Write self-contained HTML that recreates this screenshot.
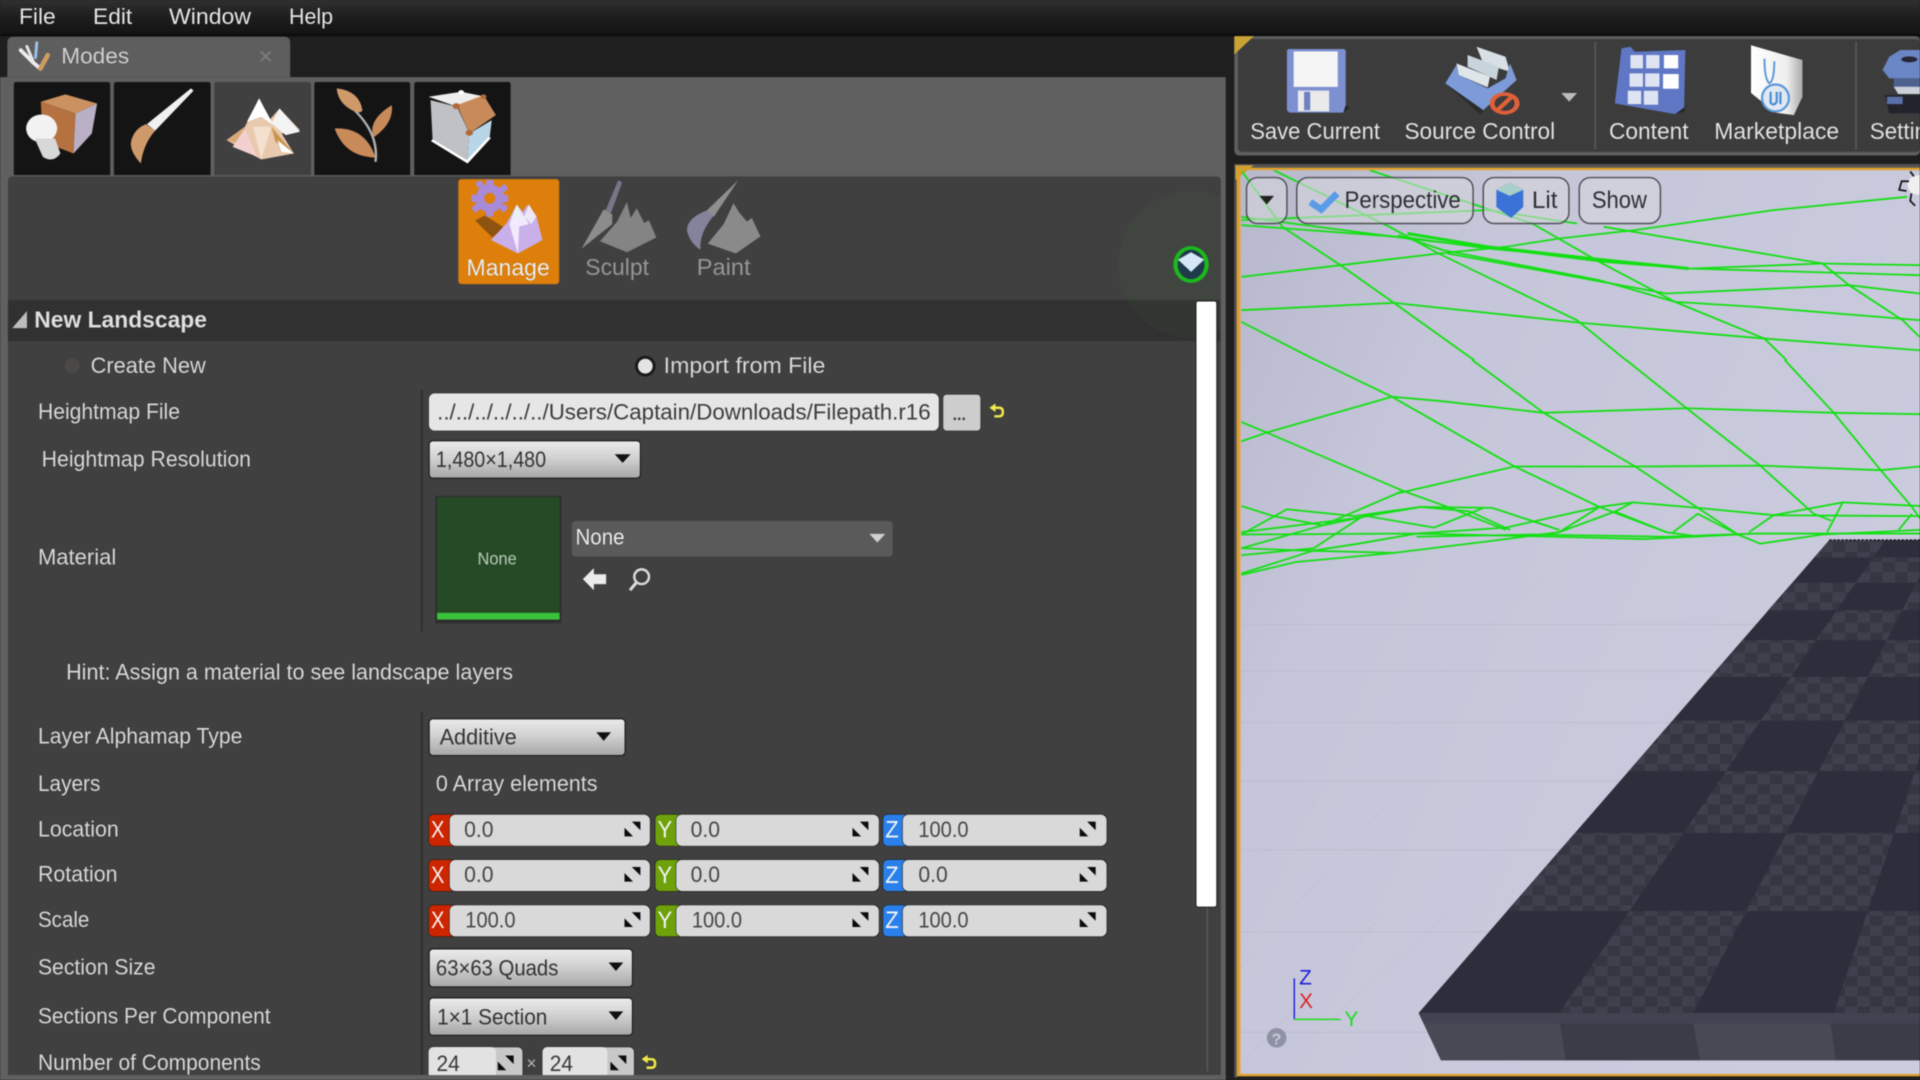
<!DOCTYPE html>
<html><head><meta charset="utf-8"><title>Modes</title>
<style>
html,body{margin:0;padding:0;width:1920px;height:1080px;overflow:hidden;background:#1f1f1f}
svg{display:block;filter:blur(.55px)}
text{font-family:"Liberation Sans",sans-serif}
.l{font-size:18px;fill:#dadada}
.d{font-size:18px;fill:#3c3c3c}
.s{filter:drop-shadow(.7px .9px 0 #000)}
</style></head><body>
<svg width="1920" height="1080" viewBox="0 0 1568 882" xmlns="http://www.w3.org/2000/svg">
<defs>
<linearGradient id="mb" x1="0" y1="0" x2="0" y2="1"><stop offset="0" stop-color="#303030"/><stop offset=".5" stop-color="#1e1e1e"/><stop offset="1" stop-color="#131313"/></linearGradient>
<linearGradient id="cb" x1="0" y1="0" x2="0" y2="1"><stop offset="0" stop-color="#ebebeb"/><stop offset=".45" stop-color="#d2d2d2"/><stop offset="1" stop-color="#a6a6a6"/></linearGradient>
<linearGradient id="vp" x1="0" y1="0" x2="1" y2=".6"><stop offset="0" stop-color="#b8b8cc"/><stop offset=".3" stop-color="#c5c6d9"/><stop offset="1" stop-color="#cbccde"/></linearGradient>
<linearGradient id="bag" x1="0" y1="0" x2="1" y2="0"><stop offset="0" stop-color="#fff"/><stop offset=".7" stop-color="#eee"/><stop offset="1" stop-color="#aaa"/></linearGradient>
<pattern id="fc" patternUnits="userSpaceOnUse" width="56" height="44"><rect width="56" height="44" fill="#363743"/><rect width="28" height="22" fill="#41424e"/><rect x="28" y="22" width="28" height="22" fill="#41424e"/></pattern>
<clipPath id="vc"><rect x="1013" y="139" width="555" height="738"/></clipPath>
<clipPath id="pc"><rect x="0" y="63" width="997" height="815"/></clipPath>
<path id="sp" d="M-6.5-1V6H.5ZM6.5 1V-6H-.5Z" fill="#0c0c0c"/>
</defs>

<!-- base -->
<rect width="1568" height="882" fill="#1f1f1f"/>
<rect width="1568" height="28" fill="url(#mb)"/>
<rect y="28" width="1568" height="1.5" fill="#0a0a0a"/>
<g class="s" fill="#e6e6e6" font-size="18">
<text x="15.5" y="19.500" textLength="30" lengthAdjust="spacingAndGlyphs">File</text>
<text x="76" y="19.500" textLength="32" lengthAdjust="spacingAndGlyphs">Edit</text>
<text x="138" y="19.500" textLength="67" lengthAdjust="spacingAndGlyphs">Window</text>
<text x="236" y="19.500" textLength="36" lengthAdjust="spacingAndGlyphs">Help</text>
</g>

<!-- left panel -->
<rect x="0" y="63" width="1001" height="819" fill="#606060"/>
<path d="M6 63V35q0-5 5-5H232q5 0 5 5V63Z" fill="#5e5e5e"/>
<!-- modes tab icon -->
<g fill="none" stroke-linecap="round">
<path d="M17 41l10 10 6 5" stroke="#ececec" stroke-width="3.200"/>
<path d="M22 38l5 12" stroke="#e8e8e8" stroke-width="2.400"/>
<path d="M30 35l-1 12" stroke="#9cc0e8" stroke-width="2.400"/>
<path d="M39 45l-6 11" stroke="#d09a60" stroke-width="3.800"/>
</g>
<text class="s" x="50" y="52" font-size="18" fill="#d4d4d4" textLength="55.5" lengthAdjust="spacingAndGlyphs">Modes</text>
<path d="M213 42l8 8M221 42l-8 8" stroke="#7c7c7c" stroke-width="1.600"/>

<!-- mode buttons -->
<g>
<path d="M11.3 143V69q0-2 2-2H88q2 0 2 2V143Z" fill="#141414"/>
<path d="M93 143V69q0-2 2-2H170q2 0 2 2V143Z" fill="#141414"/>
<path d="M175 143V69q0-2 2-2H252q2 0 2 2V143Z" fill="#404040"/>
<path d="M256.7 143V69q0-2 2-2H333q2 0 2 2V143Z" fill="#141414"/>
<path d="M338.3 143V69q0-2 2-2H415q2 0 2 2V143Z" fill="#141414"/>
</g>
<g transform="scale(.3333 .2725)">
<!-- place -->
<path d="M100 305L160 283 238 310 185 340Z" fill="#cc9160"/>
<path d="M100 305L185 340 180 460 105 425Z" fill="#b5713f"/>
<path d="M185 340L238 310 225 400 180 460Z" fill="#bab0c6"/>
<ellipse cx="102" cy="385" rx="38" ry="42" fill="#f2f2f2"/>
<path d="M85 415H135L148 460Q130 490 105 470Z" fill="#d8d8d8"/>
<!-- brush -->
<path d="M468 265L474 272 380 392 360 372Z" fill="#f0f0f0"/>
<path d="M358 372L380 392Q352 430 345 490 315 450 322 420 330 385 358 372Z" fill="#cf9a6a"/>
<!-- mountain -->
<path d="M635 295L600 380 555 420 640 478 720 460 690 400 735 390 685 325 660 360Z" fill="#e8c9ad"/>
<path d="M600 380L555 420 610 440Z" fill="#d9a878"/>
<path d="M600 385L570 440 630 470Z" fill="#f2d0d0"/>
<path d="M620 380L640 478 665 380Z" fill="#f5dfcf"/>
<path d="M665 380L720 460 675 425Z" fill="#c9954e"/>
<path d="M680 420L720 460 690 455Z" fill="#fff"/>
<path d="M635 295L605 365 640 350 670 375Z" fill="#fff"/>
<path d="M685 325L665 370 700 405 735 395Z" fill="#f4f4f4"/>
<!-- leaf -->
<path d="M920 485Q930 390 850 310" fill="none" stroke="#b0b0b0" stroke-width="6"/>
<path d="M825 265Q880 272 888 330 885 340 870 335 828 312 825 265Z" fill="#cf9a6a"/>
<path d="M960 315Q965 370 915 412 900 360 960 315Z" fill="#c98a5a"/>
<path d="M820 385Q895 380 920 472 845 470 820 385Z" fill="#c98a5a"/>
<!-- box -->
<path d="M1055 300L1120 320 1150 400 1145 485 1060 420Z" fill="#bfc1c6"/>
<path d="M1150 400L1205 360 1200 410 1145 485Z" fill="#b8d6e8"/>
<path d="M1050 290L1130 275 1190 290 1120 320Z" fill="#eee"/>
<path d="M1120 315L1185 285 1215 345 1150 400Z" fill="#c98a5a"/>
<path d="M1058 420L1145 485 1200 412" fill="none" stroke="#fff" stroke-width="7"/>
<circle cx="1130" cy="277" r="7" fill="#fff"/>
<circle cx="1150" cy="398" r="9" fill="#b06a3a"/><circle cx="1118" cy="318" r="9" fill="#b06a3a"/><circle cx="1185" cy="290" r="7" fill="#b06a3a"/>
</g>

<!-- inner panel -->
<path d="M6.5 878V148q0-4 4-4H993q4 0 4 4V878Z" fill="#404040"/>

<!-- New Landscape header -->
<rect x="6.5" y="245" width="990" height="33.5" fill="#313131"/>
<!-- glow -->
<g clip-path="url(#pc)"><circle cx="973" cy="216" r="60" fill="#40a040" fill-opacity=".06"/></g>
<path d="M10 268h12v-14Z" fill="#bdbdbd"/>
<text class="s" x="28" y="267.5" font-size="19" font-weight="bold" fill="#e0e0e0" textLength="141" lengthAdjust="spacingAndGlyphs">New Landscape</text>

<!-- tool buttons -->
<rect x="374.3" y="146.3" width="82.4" height="85.7" rx="2.5" fill="#dd7f0a"/>
<path d="M396 176l-8 4 14 14 10-8Z" fill="#7a4a10" opacity=".8"/>
<g fill="#a98ad8">
<circle cx="400" cy="162" r="11.5"/>
<path d="M397 147h6v5h-6ZM397 172h6v5h-6ZM385 159h5v6h-5ZM410 159h5v6h-5ZM388 150l4-3 4 4-4 4ZM408 170l4-4 3 4-4 4ZM388 174l-3-4 4-4 4 4ZM412 150l3 4-4 4-4-4Z"/>
</g>
<circle cx="400" cy="162" r="4.5" fill="#dd7f0a"/>
<path d="M422 167l-8 15-13 14 22 11 20-11-5-20-7-9-4 6Z" fill="#c9b0ea"/>
<path d="M422 167l-6 16 7 24 1-22 8-2Z" fill="#f2eafc"/>
<path d="M422 167l-5 13 5-3 5 5Z" fill="#e8f0f0"/>
<path d="M432 167l-4 10 6 6 4-6Z" fill="#eee8f6"/>
<text class="s" x="381" y="225" font-size="19" fill="#f2f2f2" textLength="68" lengthAdjust="spacingAndGlyphs">Manage</text>

<path d="M505 147l3 2-9 25-5-1Z" fill="#77778a"/>
<path d="M493 171l7 4 0 8-25 20Z" fill="#8c8c8c"/>
<path d="M512 165l-8 16-14 16 22 9 24-12-6-14-4 2-6-12-5 8Z" fill="#848484"/>
<text x="478" y="224.500" font-size="19" fill="#969696" textLength="52" lengthAdjust="spacingAndGlyphs">Sculpt</text>
<path d="M603 147l-27 26 7 4Z" fill="#8f8f8f"/>
<path d="M577 172q-16 6-16 16 2 10 11 16-1-14 11-28Z" fill="#85839b"/>
<path d="M599 166l-8 17-13 16 23 8 20-14-7-15-4 3-6-7Z" fill="#8a8a8a"/>
<text x="569" y="224.500" font-size="19" fill="#969696" textLength="44" lengthAdjust="spacingAndGlyphs">Paint</text>

<!-- gem -->
<ellipse cx="972.7" cy="216" rx="14.5" ry="15" fill="#1cb81c"/>
<ellipse cx="972.7" cy="216" rx="11" ry="12" fill="#1f3a4a"/>
<path d="M962 212l10.700-6 10.700 6-10.700 10Z" fill="#d4e8f6"/>

<!-- radios -->
<circle cx="59" cy="298.500" r="6" fill="#4c4848"/>
<text class="s l" x="74" y="304.500" textLength="94" lengthAdjust="spacingAndGlyphs">Create New</text>
<circle cx="527" cy="299" r="8.500" fill="#1a1a1a"/><circle cx="527" cy="299" r="6" fill="#e4e4e4"/>
<text class="s l" x="542" y="304.500" textLength="132" lengthAdjust="spacingAndGlyphs">Import from File</text>

<!-- separators -->
<path d="M344.500 318V516M344.500 581V878" stroke="#2a2a2a" stroke-width="1.200"/>

<!-- labels -->
<g class="s">
<text class="l" x="31" y="342" textLength="116" lengthAdjust="spacingAndGlyphs">Heightmap File</text>
<text class="l" x="34" y="381" textLength="171" lengthAdjust="spacingAndGlyphs">Heightmap Resolution</text>
<text class="l" x="31" y="461" textLength="64" lengthAdjust="spacingAndGlyphs">Material</text>
<text class="l" x="54" y="555" textLength="365" lengthAdjust="spacingAndGlyphs">Hint: Assign a material to see landscape layers</text>
<text class="l" x="31" y="607" textLength="167" lengthAdjust="spacingAndGlyphs">Layer Alphamap Type</text>
<text class="l" x="31" y="646" textLength="51" lengthAdjust="spacingAndGlyphs">Layers</text>
<text class="l" x="356" y="646" textLength="132" lengthAdjust="spacingAndGlyphs">0 Array elements</text>
<text class="l" x="31" y="683" textLength="66" lengthAdjust="spacingAndGlyphs">Location</text>
<text class="l" x="31" y="720" textLength="65" lengthAdjust="spacingAndGlyphs">Rotation</text>
<text class="l" x="31" y="757" textLength="42" lengthAdjust="spacingAndGlyphs">Scale</text>
<text class="l" x="31" y="796" textLength="96" lengthAdjust="spacingAndGlyphs">Section Size</text>
<text class="l" x="31" y="836" textLength="190" lengthAdjust="spacingAndGlyphs">Sections Per Component</text>
<text class="l" x="31" y="874" textLength="182" lengthAdjust="spacingAndGlyphs">Number of Components</text>
</g>

<!-- heightmap file -->
<rect x="350" y="321" width="417" height="31" rx="5" fill="#e6e6e6" stroke="#2c2c2c" stroke-width=".6"/>
<text class="d" x="357" y="342.500" textLength="403" lengthAdjust="spacingAndGlyphs">../../../../../../Users/Captain/Downloads/Filepath.r16</text>
<rect x="770" y="322" width="31" height="30" rx="3" fill="#cdcdcd" stroke="#2c2c2c" stroke-width=".6"/>
<text x="778" y="343" font-size="13" fill="#333" font-weight="bold">...</text>
<path d="M810 333h6q3 0 3 3.500t-3 3.500h-4" fill="none" stroke="#efe94a" stroke-width="2"/><path d="M813 329.500l-5 3.500 5 3.500Z" fill="#efe94a"/>

<!-- combos -->
<rect x="350.500" y="360" width="172.500" height="30.500" rx="3" fill="url(#cb)" stroke="#161616" stroke-width=".9"/>
<text class="d" x="356" y="381.500" textLength="90" lengthAdjust="spacingAndGlyphs" style="fill:#333">1,480×1,480</text>
<path d="M502 371h13l-6.500 7Z" fill="#111"/>

<rect x="350.500" y="587" width="160" height="30" rx="3" fill="url(#cb)" stroke="#161616" stroke-width=".9"/>
<text class="d" x="359" y="608" textLength="63" lengthAdjust="spacingAndGlyphs" style="fill:#333">Additive</text>
<path d="M487 598h12l-6 7Z" fill="#111"/>

<rect x="350.500" y="775" width="166" height="31" rx="3" fill="url(#cb)" stroke="#161616" stroke-width=".9"/>
<text class="d" x="356" y="796.500" textLength="100" lengthAdjust="spacingAndGlyphs" style="fill:#333">63×63 Quads</text>
<path d="M497 786h12l-6 7Z" fill="#111"/>

<rect x="350.500" y="815" width="166" height="30.500" rx="3" fill="url(#cb)" stroke="#161616" stroke-width=".9"/>
<text class="d" x="357" y="836.500" textLength="90" lengthAdjust="spacingAndGlyphs" style="fill:#333">1×1 Section</text>
<path d="M497 826h12l-6 7Z" fill="#111"/>

<!-- material -->
<rect x="355.500" y="405" width="103" height="104" fill="#1a1a1a" opacity=".5"/>
<rect x="357" y="406" width="100" height="100" fill="#264a26"/>
<rect x="357" y="500.500" width="100" height="5.500" fill="#3ac23a"/>
<text x="390" y="461" font-size="14" fill="#b8ccb8" textLength="32" lengthAdjust="spacingAndGlyphs">None</text>
<rect x="467" y="425.500" width="262" height="29" rx="3" fill="#5a5a5a"/>
<text class="s" x="470" y="444.500" font-size="18" fill="#eee" textLength="40" lengthAdjust="spacingAndGlyphs">None</text>
<path d="M710 436h13l-6.500 7Z" fill="#d0d0d0"/>
<path d="M476 473l9-9v5h10v8h-10v5Z" fill="#ececec"/>
<circle cx="524" cy="471" r="6" fill="none" stroke="#dcdcdc" stroke-width="2"/><path d="M519.500 476l-5 6" stroke="#dcdcdc" stroke-width="2.500"/>

<!-- vector fields -->
<g stroke="#1e1e1e" stroke-width=".5">
<rect x="350" y="665" width="181" height="26" rx="4" fill="#cc2500"/><rect x="367" y="665" width="164" height="26" rx="5" fill="#d9d9d9"/>
<rect x="535" y="665" width="183" height="26" rx="4" fill="#6ea20a"/><rect x="552" y="665" width="166" height="26" rx="5" fill="#d9d9d9"/>
<rect x="721" y="665" width="183" height="26" rx="4" fill="#2a80ea"/><rect x="737" y="665" width="167" height="26" rx="5" fill="#d9d9d9"/>
<rect x="350" y="702" width="181" height="26" rx="4" fill="#cc2500"/><rect x="367" y="702" width="164" height="26" rx="5" fill="#d9d9d9"/>
<rect x="535" y="702" width="183" height="26" rx="4" fill="#6ea20a"/><rect x="552" y="702" width="166" height="26" rx="5" fill="#d9d9d9"/>
<rect x="721" y="702" width="183" height="26" rx="4" fill="#2a80ea"/><rect x="737" y="702" width="167" height="26" rx="5" fill="#d9d9d9"/>
<rect x="350" y="739" width="181" height="26" rx="4" fill="#cc2500"/><rect x="367" y="739" width="164" height="26" rx="5" fill="#d9d9d9"/>
<rect x="535" y="739" width="183" height="26" rx="4" fill="#6ea20a"/><rect x="552" y="739" width="166" height="26" rx="5" fill="#d9d9d9"/>
<rect x="721" y="739" width="183" height="26" rx="4" fill="#2a80ea"/><rect x="737" y="739" width="167" height="26" rx="5" fill="#d9d9d9"/>
</g>
<g font-size="20" fill="#f4f4f4">
<text x="352" y="684" textLength="11" lengthAdjust="spacingAndGlyphs">X</text><text x="352" y="721" textLength="11" lengthAdjust="spacingAndGlyphs">X</text><text x="352" y="758" textLength="11" lengthAdjust="spacingAndGlyphs">X</text>
<text x="537" y="684" textLength="12" lengthAdjust="spacingAndGlyphs">Y</text><text x="537" y="721" textLength="12" lengthAdjust="spacingAndGlyphs">Y</text><text x="537" y="758" textLength="12" lengthAdjust="spacingAndGlyphs">Y</text>
<text x="723" y="684" textLength="11" lengthAdjust="spacingAndGlyphs">Z</text><text x="723" y="721" textLength="11" lengthAdjust="spacingAndGlyphs">Z</text><text x="723" y="758" textLength="11" lengthAdjust="spacingAndGlyphs">Z</text>
</g>
<g font-size="18" fill="#454545">
<text x="379" y="683.500" textLength="24" lengthAdjust="spacingAndGlyphs">0.0</text>
<text x="564" y="683.500" textLength="24" lengthAdjust="spacingAndGlyphs">0.0</text>
<text x="750" y="683.500" textLength="41" lengthAdjust="spacingAndGlyphs">100.0</text>
<text x="379" y="720.500" textLength="24" lengthAdjust="spacingAndGlyphs">0.0</text>
<text x="564" y="720.500" textLength="24" lengthAdjust="spacingAndGlyphs">0.0</text>
<text x="750" y="720.500" textLength="24" lengthAdjust="spacingAndGlyphs">0.0</text>
<text x="380" y="757.500" textLength="41" lengthAdjust="spacingAndGlyphs">100.0</text>
<text x="565" y="757.500" textLength="41" lengthAdjust="spacingAndGlyphs">100.0</text>
<text x="750" y="757.500" textLength="41" lengthAdjust="spacingAndGlyphs">100.0</text>
</g>
<use href="#sp" x="516.500" y="677"/><use href="#sp" x="702.700" y="677"/><use href="#sp" x="888.300" y="677"/>
<use href="#sp" x="516.500" y="714"/><use href="#sp" x="702.700" y="714"/><use href="#sp" x="888.300" y="714"/>
<use href="#sp" x="516.500" y="751"/><use href="#sp" x="702.700" y="751"/><use href="#sp" x="888.300" y="751"/>

<!-- components -->
<rect x="350" y="855" width="77" height="26" rx="4" fill="#c8c8c8" stroke="#1e1e1e" stroke-width=".5"/>
<rect x="350" y="855" width="55" height="26" rx="4" fill="#e2e2e2"/>
<rect x="443" y="855" width="75" height="26" rx="4" fill="#c8c8c8" stroke="#1e1e1e" stroke-width=".5"/>
<rect x="443" y="855" width="53" height="26" rx="4" fill="#e2e2e2"/>
<text x="356.500" y="874.500" font-size="18" fill="#383838" textLength="19" lengthAdjust="spacingAndGlyphs">24</text>
<text x="449" y="874.500" font-size="18" fill="#383838" textLength="19" lengthAdjust="spacingAndGlyphs">24</text>
<text x="430" y="873" font-size="14" fill="#b8b8b8">×</text>
<use href="#sp" x="413" y="868"/><use href="#sp" x="505" y="868"/>
<path d="M526 865h6q3 0 3 3.500t-3 3.500h-4" fill="none" stroke="#efe94a" stroke-width="2"/><path d="M529 861.500l-5 3.500 5 3.500Z" fill="#efe94a"/>

<!-- scrollbar -->
<path d="M986 741V875" stroke="#5c5c5c" stroke-width="1"/>
<rect x="976.700" y="245.800" width="17" height="495" rx="2" fill="#fff" stroke="#1c1c1c" stroke-width=".8"/>

<!-- bottom strip -->
<rect x="0" y="878" width="1001" height="4" fill="#606060"/>

<!-- top toolbar -->
<rect x="1008" y="29.500" width="560" height="97.500" rx="4" fill="#5e5e5e"/>
<rect x="1011" y="32" width="557" height="92" rx="3" fill="#3c3c3c"/>
<path d="M1008 29.500h16l-16 15Z" fill="#c9a236"/>
<rect x="1302" y="34" width="1.600" height="88" fill="#555"/>
<rect x="1515" y="34" width="1.600" height="88" fill="#555"/>
<!-- save -->
<path d="M1051 42q0-2 2-2h44q2 0 2 2v48l-2 2h-44l-2-2Z" fill="#7c90d2"/>
<rect x="1056.500" y="42" width="36" height="29" fill="#f5f5f5"/>
<rect x="1060" y="74" width="25.500" height="17" fill="#eaeaea"/>
<rect x="1065" y="75" width="5" height="15" fill="#6d80c0"/>
<path d="M1097 92l5-4-3-2Z" fill="#222"/>
<g transform="translate(996.300 0) scale(.3644 .2724)">
<!-- source control -->
<path d="M575 140L640 170 650 215 590 190Z" fill="#d8e0e6"/>
<path d="M555 165L625 200 620 240 555 200Z" fill="#c8d4dc"/>
<path d="M530 190L605 230 600 262 535 225Z" fill="#dfe6ea"/>
<path d="M505 250L530 195 535 225 600 265 640 235 650 190 665 240 590 330Z" fill="#7d9bd8"/>
<path d="M505 250L590 330 585 345Z" fill="#222" opacity=".6"/>
<circle cx="638" cy="310" r="28" fill="none" stroke="#e0603a" stroke-width="11"/>
<path d="M618 335L658 285" stroke="#e0603a" stroke-width="11"/>
<!-- content -->
<path d="M885 310L900 145 920 140 930 155 1043 150 1040 335 1020 342Z" fill="#5f77c4"/>
<path d="M1020 342L1040 335 1043 320Z" fill="#222"/>
<g fill="#dfe4f2">
<rect x="920" y="165" width="28" height="40"/><rect x="955" y="165" width="30" height="40"/><rect x="995" y="165" width="32" height="40" fill="#fff"/>
<rect x="918" y="220" width="30" height="40"/><rect x="953" y="220" width="32" height="40"/><rect x="993" y="222" width="35" height="44" fill="#fff"/>
<rect x="914" y="272" width="30" height="40"/><rect x="950" y="272" width="32" height="42"/>
</g>
<!-- settings gear -->
<path d="M1500 170L1525 150 1600 150 1620 235 1500 235 1485 210Z" fill="#6b86c4"/>
<ellipse cx="1545" cy="178" rx="18" ry="9" fill="#262636"/>
<path d="M1510 235H1620V262H1510Z" fill="#4e628e"/>
<path d="M1510 260H1620V282H1520Z" fill="#ccd0da"/>
<path d="M1490 285H1620V340H1500Z" fill="#23232c"/>
<path d="M1495 290H1530V312H1495Z" fill="#5a70a8"/>
</g>
<!-- marketplace -->
<path d="M1430 42l0-5 42 12v30l-7 15-15-2-20-16Z" fill="url(#bag)"/>
<path d="M1441 48q0 17 4 20 4-2 4-18" fill="none" stroke="#5a98d8" stroke-width="1.600"/>
<circle cx="1450" cy="80" r="11" fill="#e0e8f2" stroke="#5a98d8" stroke-width="1.800"/>
<path d="M1446 75v9q3 3 5-1v-8M1454 75v10" fill="none" stroke="#4a8cd0" stroke-width="1.800"/>
<g class="s" font-size="19" fill="#e4e4e4">
<text x="1021" y="113.500" textLength="106" lengthAdjust="spacingAndGlyphs">Save Current</text>
<text x="1147" y="113.500" textLength="123" lengthAdjust="spacingAndGlyphs">Source Control</text>
<text x="1314" y="113.500" textLength="65" lengthAdjust="spacingAndGlyphs">Content</text>
<text x="1400" y="113.500" textLength="102" lengthAdjust="spacingAndGlyphs">Marketplace</text>
<text x="1527" y="113.500" textLength="66" lengthAdjust="spacingAndGlyphs">Settings</text>
</g>
<path d="M1275 76h13l-6.500 7Z" fill="#bcbcbc"/>

<!-- viewport -->
<rect x="1008" y="134" width="560" height="748" fill="#1f1f1f"/>
<rect x="1008" y="134" width="560" height="3.500" fill="#555"/>
<rect x="1008" y="134" width="2.200" height="746" fill="#555"/>
<rect x="1010" y="137" width="558" height="742" fill="#e2a12e"/>
<rect x="1013" y="139" width="555" height="738" fill="url(#vp)"/>
<path d="M1009 135h15l-15 12Z" fill="#d0a030"/>

<g clip-path="url(#vc)">
<!-- floor grid -->
<g stroke="#b6b7ca" stroke-width=".8" fill="none" opacity=".6">
<path d="M1013 761H1280M1013 843H1175M1013 694H1330M1013 638H1380M1013 590H1420M1013 548H1460M1013 510H1490"/>
</g>
<g stroke="#b6b7ca" stroke-width=".7" fill="none" opacity=".35">
<path d="M1013 870L1130 747M1013 790L1130 660M1013 715L1260 470M1040 877L1180 747"/>
</g>
<!-- plane, zoom-7 coordinates -->
<g transform="translate(996.300 294) scale(.3646 .375)">
<path d="M1365 392H1700V1525H495L445 1422Z" fill="#2d2e3b"/>
<g fill="url(#fc)" fill-opacity=".92">
<path d="M760 1422H1060L1179 1200H917Z"/><path d="M1375 1422H1690L1727 1200H1451Z"/>
<path d="M643 1200H917L1038 1030H795Z"/><path d="M1179 1200H1451L1510 1030H1269Z"/>
<path d="M1038 1030H1269L1341 895H1134Z"/><path d="M1510 1030H1755L1777 895H1557Z"/>
<path d="M916 895H1134L1211 785H1014Z"/><path d="M1341 895H1557L1595 785H1400Z"/>
<path d="M1211 785H1400L1451 690H1279Z"/>
<path d="M1099 690H1279L1335 610H1170Z"/><path d="M1451 690H1627L1655 610H1494Z"/>
<path d="M1335 610H1494L1528 545H1382Z"/>
<path d="M1228 545H1382L1424 485H1282Z"/><path d="M1528 545H1677L1698 485H1560Z"/>
<path d="M1424 485H1560L1590 430H1463Z"/>
<path d="M1331 430H1463L1490 392H1365Z"/>
</g>
<path d="M445 1422H1700V1445H456Z" fill="#424350"/>
<g>
<path d="M456 1445H762L775 1525H495Z" fill="#484955"/>
<path d="M762 1445H1060L1075 1525H775Z" fill="#3b3c48"/>
<path d="M1060 1445H1368L1380 1525H1075Z" fill="#484955"/>
<path d="M1368 1445H1700V1525H1380Z" fill="#3b3c48"/>
</g>
<path d="M1365 392H1568" stroke="#181820" stroke-width="3" stroke-dasharray="5 4"/>
</g>

<!-- wire: upper (zoom-3 coordinates) -->
<g transform="translate(996.300 0) scale(.3644 .2724)" fill="none" stroke="#12e012" stroke-width="1.800" stroke-linejoin="round">
<polyline vector-effect="non-scaling-stroke" points="48,830 270,795 490,760 640,740 760,715 930,690 1240,630 1540,590"/>
<polyline vector-effect="non-scaling-stroke" points="48,930 390,908 810,968 1220,1015 1568,1050"/>
<polyline vector-effect="non-scaling-stroke" points="48,965 215,1080"/>
<polyline vector-effect="non-scaling-stroke" points="50,515 140,680 270,795 390,908 570,1080"/>
<polyline vector-effect="non-scaling-stroke" points="120,510 380,680 490,760 800,960 910,1080"/>
<polyline vector-effect="non-scaling-stroke" points="335,510 700,670 850,785 1020,905 1220,1015 1270,1080"/>
<polyline vector-effect="non-scaling-stroke" points="48,650 420,715 620,745 860,785 1050,805 1568,825"/>
<polyline vector-effect="non-scaling-stroke" points="48,675 420,712 600,745 800,770 1000,800"/>
<polyline vector-effect="non-scaling-stroke" points="48,660 600,630 800,670"/>
<polyline vector-effect="non-scaling-stroke" points="400,705 500,750 850,840 1020,905 1200,920 1568,960"/>
<polyline vector-effect="non-scaling-stroke" points="860,680 1350,790 1410,855 1530,960 1568,1010"/>
<polyline vector-effect="non-scaling-stroke" points="1060,805 1350,790 1568,795"/>
<polyline vector-effect="non-scaling-stroke" points="510,760 1000,880 1410,855 1568,880"/>
<polyline vector-effect="non-scaling-stroke" points="420,700 600,740 830,775 1050,805" stroke-width="3"/>
</g>
<!-- wire: lower (zoom-7 coordinates) -->
<g transform="translate(996.300 294) scale(.3646 .375)" fill="none" stroke="#12e012" stroke-width="1.800" stroke-linejoin="round">
<polyline vector-effect="non-scaling-stroke" points="215,0 385,80 660,232 850,320 1000,375"/>
<polyline vector-effect="non-scaling-stroke" points="565,0 725,115 930,232 1075,325 1160,380"/>
<polyline vector-effect="non-scaling-stroke" points="910,0 1045,105 1210,230 1330,335 1370,350"/>
<polyline vector-effect="non-scaling-stroke" points="1265,0 1375,115 1480,240 1550,320 1568,345"/>
<polyline vector-effect="non-scaling-stroke" points="48,177 105,158 385,80 500,90 725,115 1045,105 1375,115 1568,118"/>
<polyline vector-effect="non-scaling-stroke" points="48,135 105,158 410,285 510,320 640,370"/>
<polyline vector-effect="non-scaling-stroke" points="400,290 660,232 930,232 1210,230 1480,240 1568,232"/>
<polyline vector-effect="non-scaling-stroke" points="48,318 120,340 230,360 330,340 480,365 590,322"/>
<polyline vector-effect="non-scaling-stroke" points="48,380 150,325 300,340 450,320 610,322 760,370"/>
<polyline vector-effect="non-scaling-stroke" points="48,410 230,360 410,285"/>
<polyline vector-effect="non-scaling-stroke" points="48,375 300,345 450,320 560,330 650,370"/>
<polyline vector-effect="non-scaling-stroke" points="48,410 190,415 390,420 600,395 760,375 850,320"/>
<polyline vector-effect="non-scaling-stroke" points="48,425 210,410 320,340"/>
<polyline vector-effect="non-scaling-stroke" points="48,465 210,415 310,400 440,378 750,385 950,390 1160,380 1210,400 1350,380 1568,370"/>
<polyline vector-effect="non-scaling-stroke" points="48,468 170,440 390,420"/>
<polyline vector-effect="non-scaling-stroke" points="48,380 440,378 640,365 850,320 925,310 1070,322 1240,338 1395,310 1568,318"/>
<polyline vector-effect="non-scaling-stroke" points="885,330 1000,375 1075,385"/>
<polyline vector-effect="non-scaling-stroke" points="1015,375 1070,335 1160,380"/>
<polyline vector-effect="non-scaling-stroke" points="1185,375 1240,338"/>
<polyline vector-effect="non-scaling-stroke" points="1360,375 1395,310"/>
<polyline vector-effect="non-scaling-stroke" points="1520,370 1550,335"/>
<polyline vector-effect="non-scaling-stroke" points="925,310 885,330 760,375"/>
<polyline vector-effect="non-scaling-stroke" points="1240,338 1568,340"/>
<polyline vector-effect="non-scaling-stroke" points="440,385 700,380 1000,385 1200,378 1568,378"/>
</g>

<!-- axes -->
<path d="M1057 799V832.500" stroke="#2222dd" stroke-width="1.200"/>
<path d="M1057 832.500H1095" stroke="#22dd22" stroke-width="1.200"/>
<text x="1061" y="804" font-size="17" fill="#2020dd">Z</text>
<text x="1061" y="823" font-size="17" fill="#dd2020">X</text>
<text x="1098" y="838" font-size="17" fill="#20dd20">Y</text>
<circle cx="1042.600" cy="847.600" r="8" fill="#8f91a4"/>
<text x="1038.500" y="853" font-size="13" font-weight="bold" fill="#c8c9da">?</text>

<!-- viewport buttons -->
<g fill="#d6d6dc" fill-opacity=".6" stroke="#4e4e54" stroke-width="1.200">
<rect x="1018" y="145" width="33" height="37.500" rx="9"/>
<rect x="1059" y="145" width="144" height="37.500" rx="9"/>
<rect x="1211.300" y="145" width="70" height="37.500" rx="9"/>
<rect x="1289.700" y="145" width="66.300" height="37.500" rx="9"/>
</g>
<path d="M1028.500 160h12l-6 7Z" fill="#222"/>
<path d="M1070 165l9 6 13-13" fill="none" stroke="#5a9ce8" stroke-width="5.500"/>
<path d="M1222 155l11-6 11 6v14l-10 9-12-9Z" fill="#3a72d8"/>
<path d="M1222 155l11-6 11 6-11 5Z" fill="#a8d0c8"/>
<g font-size="20" fill="#2e2e34">
<text x="1098" y="170" textLength="95" lengthAdjust="spacingAndGlyphs">Perspective</text>
<text x="1251" y="170" textLength="21" lengthAdjust="spacingAndGlyphs">Lit</text>
<text x="1300" y="170" textLength="45" lengthAdjust="spacingAndGlyphs">Show</text>
</g>
<!-- light icon -->
<circle cx="1566" cy="151" r="8" fill="#efefef"/>
<path d="M1560 140l3 4M1559 148l-6 0-2 7 6 1M1561 158l-1 6 4 4" fill="none" stroke="#111" stroke-width="1.400"/>
</g>
</svg>
</body></html>
